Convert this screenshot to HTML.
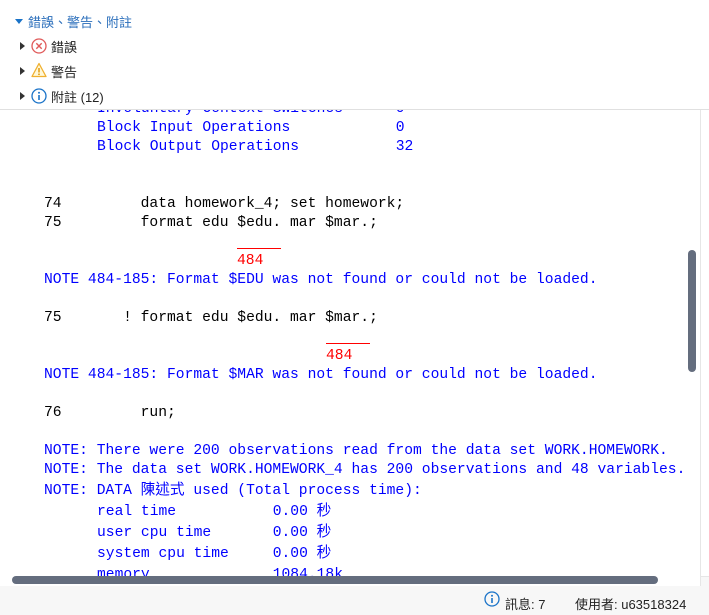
<!DOCTYPE html>
<html><head><meta charset="utf-8"><style>
body{margin:0;width:709px;height:614px;overflow:hidden;background:#fff;position:relative;font-family:"Liberation Sans","Noto Sans CJK TC",sans-serif}
.m{position:absolute;font-family:"Liberation Mono","Noto Sans CJK TC",monospace;font-size:14.65px;white-space:pre;line-height:18px;color:#0000ff}
.k{color:#000}
.r{color:#f00}
.u{position:absolute;height:1px;background:#f00}
#top{position:absolute;left:0;top:0;width:709px;height:109px;background:#fff;border-bottom:1px solid #e0e0e0;z-index:2}
.t{position:absolute;font-size:13px;color:#222;white-space:pre}
.tri{position:absolute;width:0;height:0;border-top:4px solid transparent;border-bottom:4px solid transparent;border-left:5px solid #333}
</style></head><body>
<div id="top">
 <div style="position:absolute;left:15px;top:19px;width:0;height:0;border-left:4px solid transparent;border-right:4px solid transparent;border-top:5px solid #1a73c8"></div>
 <div class="t" style="left:28px;top:12px;color:#2a6ebb">錯誤、警告、附註</div>
 <div class="tri" style="left:20px;top:42px"></div>
 <svg style="position:absolute;left:31px;top:38px" width="16" height="16"><circle cx="8" cy="8" r="7" fill="none" stroke="#e05a5a" stroke-width="1.3"/><path d="M5.3 5.3l5.4 5.4M10.7 5.3l-5.4 5.4" stroke="#e05a5a" stroke-width="1.4"/></svg>
 <div class="t" style="left:51px;top:37px">錯誤</div>
 <div class="tri" style="left:20px;top:67px"></div>
 <svg style="position:absolute;left:31px;top:62px" width="16" height="16"><path d="M8 1.5L15 14.5H1z" fill="#fff8d8" stroke="#f0b030" stroke-width="1.3" stroke-linejoin="round"/><path d="M8 6v4.5" stroke="#e09a10" stroke-width="1.5"/><circle cx="8" cy="12.3" r=".9" fill="#e09a10"/></svg>
 <div class="t" style="left:51px;top:62px">警告</div>
 <div class="tri" style="left:20px;top:92px"></div>
 <svg style="position:absolute;left:31px;top:88px" width="16" height="16"><circle cx="8" cy="8" r="7" fill="none" stroke="#1a73c8" stroke-width="1.3"/><circle cx="8" cy="4.8" r="1" fill="#1a73c8"/><path d="M8 7v5" stroke="#1a73c8" stroke-width="1.6"/></svg>
 <div class="t" style="left:51px;top:87px">附註 (12)</div>
</div>
<div class="m" style="left:97px;top:100px">Involuntary Context Switches      0</div>
<div class="m" style="left:97px;top:119px">Block Input Operations            0</div>
<div class="m" style="left:97px;top:138px">Block Output Operations           32</div>
<div class="m k" style="left:44px;top:195px">74         data homework_4; set homework;</div>
<div class="m k" style="left:44px;top:214px">75         format edu $edu. mar $mar.;</div>
<div class="u" style="left:237px;top:248px;width:44px"></div>
<div class="m r" style="left:237px;top:252px">484</div>
<div class="m" style="left:44px;top:271px">NOTE 484-185: Format $EDU was not found or could not be loaded.</div>
<div class="m k" style="left:44px;top:309px">75       ! format edu $edu. mar $mar.;</div>
<div class="u" style="left:326px;top:343px;width:44px"></div>
<div class="m r" style="left:326px;top:347px">484</div>
<div class="m" style="left:44px;top:366px">NOTE 484-185: Format $MAR was not found or could not be loaded.</div>
<div class="m k" style="left:44px;top:404px">76         run;</div>
<div class="m" style="left:44px;top:442px">NOTE: There were 200 observations read from the data set WORK.HOMEWORK.</div>
<div class="m" style="left:44px;top:461px">NOTE: The data set WORK.HOMEWORK_4 has 200 observations and 48 variables.</div>
<div class="m" style="left:44px;top:482px">NOTE: DATA 陳述式 used (Total process time):</div>
<div class="m" style="left:97px;top:503px">real time           0.00 秒</div>
<div class="m" style="left:97px;top:524px">user cpu time       0.00 秒</div>
<div class="m" style="left:97px;top:545px">system cpu time     0.00 秒</div>
<div class="m" style="left:97px;top:566px">memory              1084.18k</div>
<div style="position:absolute;left:0;top:576px;width:709px;height:38px;background:#f7f7f7;border-top:1px solid #e6e6e6"></div>
<div style="position:absolute;left:0;top:576px;width:700px;height:10px;background:#fff"></div>
<div style="position:absolute;left:700px;top:110px;width:1px;height:476px;background:#e6e6e6"></div>
<div style="position:absolute;left:12px;top:576px;width:646px;height:8px;border-radius:4px;background:#646d7e"></div>
<div style="position:absolute;left:688px;top:250px;width:8px;height:122px;border-radius:4px;background:#646d7e"></div>
<svg style="position:absolute;left:484px;top:591px" width="16" height="16"><circle cx="8" cy="8" r="7" fill="none" stroke="#1a73c8" stroke-width="1.3"/><circle cx="8" cy="4.8" r="1" fill="#1a73c8"/><path d="M8 7v5" stroke="#1a73c8" stroke-width="1.6"/></svg>
<div class="t" style="left:505px;top:594px">訊息: 7</div>
<div class="t" style="left:575px;top:594px">使用者: u63518324</div>
</body></html>
